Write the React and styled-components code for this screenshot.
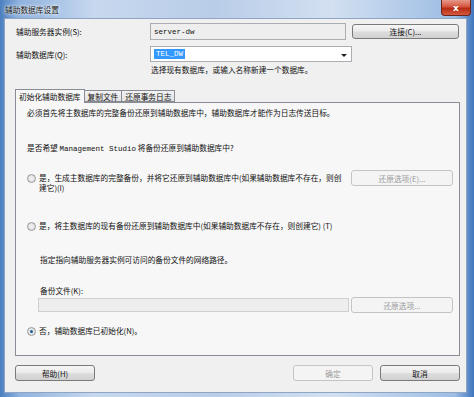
import React from 'react';
import styled, { createGlobalStyle } from 'styled-components';

const GlobalStyle = createGlobalStyle`
  html, body {
    margin: 0;
    padding: 0;
    overflow: hidden;
  }
  body {
    font-family: "Noto Sans CJK SC", "Liberation Sans", sans-serif;
    font-size: 7.7px;
    color: #111;
  }
`;

const Frame = styled.div`
  width: 474px;
  height: 397px;
  box-sizing: border-box;
  display: flex;
  flex-direction: column;
  padding: 0 7px 4px 4px;
  background: linear-gradient(to right, #4b7fc0 0%, #8fb2de 4%, #c7d8ee 20%, #b9cde8 45%, #d2e0f1 70%, #9dbde4 96%, #3f76bd 100%);
`;

const TitleBar = styled.div`
  height: 18px;
  display: flex;
  align-items: flex-start;
  justify-content: space-between;
`;

const Title = styled.span`
  padding: 4px 0 0 1px;
  font-size: 7.7px;
  color: #1a1a1a;
  text-shadow: 0 0 4px #fff, 0 0 2px #fff;
`;

const CloseBtn = styled.div`
  width: 28px;
  height: 15px;
  margin-right: -4px;
  border: 1px solid #6b2418;
  border-top: none;
  border-radius: 0 0 4px 4px;
  background: linear-gradient(#e6998a 0%, #d4553f 45%, #b52a13 55%, #d45a3f 100%);
  color: #fff;
  display: flex;
  align-items: center;
  justify-content: center;
  font-family: "DejaVu Sans", sans-serif;
  font-weight: bold;
  font-size: 9px;
`;

const Client = styled.div`
  flex: 1;
  background: #f0f0f0;
  border: 1px solid #8ea5c4;
  padding: 4px 6px 0 10px;
  display: flex;
  flex-direction: column;
`;

const FieldRow = styled.div`
  display: flex;
  align-items: center;
  height: ${(p) => p.h || 17}px;
  margin-top: ${(p) => p.mt || 0}px;
`;

const Label = styled.div`
  width: ${(p) => p.w || 135}px;
  padding-left: ${(p) => p.pl || 1}px;
  box-sizing: border-box;
`;

const TextBox = styled.div`
  width: ${(p) => p.w}px;
  height: ${(p) => p.h || 17}px;
  box-sizing: border-box;
  border: 1px solid ${(p) => (p.disabled ? '#cfcfcf' : '#abadb3')};
  background: ${(p) => (p.white ? '#fff' : '#eeeeee')};
  display: flex;
  align-items: center;
  padding-left: 3px;
  position: relative;
`;

const Mono = styled.span`
  font-family: "Liberation Mono", "DejaVu Sans Mono", monospace;
  font-size: 7.5px;
`;

const Selected = styled.span`
  background: #3399ff;
  color: #fff;
  font-family: "Liberation Mono", "DejaVu Sans Mono", monospace;
  font-size: 7.5px;
  padding: 0 2px;
  line-height: 10px;
`;

const Arrow = styled.span`
  position: absolute;
  right: 4px;
  top: 7px;
  width: 0;
  height: 0;
  border-left: 3px solid transparent;
  border-right: 3px solid transparent;
  border-top: 3px solid #222;
`;

const Button = styled.div`
  width: ${(p) => p.w}px;
  height: ${(p) => p.h || 15}px;
  margin-left: ${(p) => p.ml || 0}px;
  box-sizing: border-box;
  border: 1px solid ${(p) => (p.disabled ? '#c4c4c4' : '#7a7a7a')};
  border-radius: 3px;
  background: ${(p) =>
    p.disabled
      ? '#f4f4f4'
      : 'linear-gradient(#f6f6f6 0%, #ebebeb 48%, #dddddd 52%, #d1d1d1 100%)'};
  color: ${(p) => (p.disabled ? '#9a9a9a' : '#111')};
  display: flex;
  align-items: center;
  justify-content: center;
  flex-shrink: 0;
`;

const Hint = styled.div`
  margin: 2px 0 0 136px;
  height: 11px;
  line-height: 11px;
`;

const Tabs = styled.div`
  display: flex;
  align-items: flex-end;
  margin-top: 13px;
  height: 14px;
  position: relative;
  z-index: 1;
`;

const Tab = styled.div`
  height: ${(p) => (p.active ? 14 : 12)}px;
  box-sizing: border-box;
  padding: 0 3px;
  margin-bottom: ${(p) => (p.active ? -1 : 0)}px;
  border: 1px solid #898c95;
  border-bottom: ${(p) => (p.active ? 'none' : '1px solid #898c95')};
  margin-left: ${(p) => (p.active ? 0 : -1)}px;
  background: ${(p) => (p.active ? '#f7f7f7' : 'linear-gradient(#f2f2f2, #e3e3e3)')};
  display: flex;
  align-items: center;
`;

const Panel = styled.div`
  height: 254px;
  box-sizing: border-box;
  border: 1px solid #898c95;
  background: #f7f7f7;
  padding: 4px 6px 0 11px;
  display: flex;
  flex-direction: column;
`;

const Para = styled.div`
  line-height: 11px;
  margin-top: ${(p) => p.mt || 0}px;
  padding-left: ${(p) => p.pl || 0}px;
`;

const OptionRow = styled.div`
  display: flex;
  align-items: flex-start;
  margin-top: ${(p) => p.mt || 0}px;
`;

const Radio = styled.span`
  width: 7px;
  height: 7px;
  border-radius: 50%;
  border: 1px solid #9a9a9a;
  background: radial-gradient(circle, #f4f4f4 0%, #d6d6d6 100%);
  flex-shrink: 0;
  margin: 1px 3px 0 0;
  display: flex;
  align-items: center;
  justify-content: center;
  &::after {
    content: '';
    display: ${(p) => (p.checked ? 'block' : 'none')};
    width: 3px;
    height: 3px;
    border-radius: 50%;
    background: #1c5f96;
  }
`;

const OptionText = styled.div`
  width: ${(p) => p.w || 'auto'};
  line-height: 10px;
`;

const Footer = styled.div`
  display: flex;
  align-items: center;
  margin-top: 9px;
`;

const Spacer = styled.div`
  flex: 1;
`;

export default function App() {
  return (
    <>
      <GlobalStyle />
      <Frame>
        <TitleBar>
          <Title>辅助数据库设置</Title>
          <CloseBtn>x</CloseBtn>
        </TitleBar>
        <Client>
          <FieldRow>
            <Label>辅助服务器实例(S):</Label>
            <TextBox w={196}>
              <Mono>server-dw</Mono>
            </TextBox>
            <Button w={107} ml={6}>连接(C)...</Button>
          </FieldRow>
          <FieldRow mt={6} h={16}>
            <Label>辅助数据库(Q):</Label>
            <TextBox w={202} h={16} white>
              <Selected>TEL_DW</Selected>
              <Arrow />
            </TextBox>
          </FieldRow>
          <Hint>选择现有数据库，或输入名称新建一个数据库。</Hint>
          <Tabs>
            <Tab active>初始化辅助数据库</Tab>
            <Tab>复制文件</Tab>
            <Tab>还原事务日志</Tab>
          </Tabs>
          <Panel>
            <Para>必须首先将主数据库的完整备份还原到辅助数据库中，辅助数据库才能作为日志传送目标。</Para>
            <Para mt={24}>
              是否希望 <Mono>Management Studio</Mono> 将备份还原到辅助数据库中?
            </Para>
            <OptionRow mt={18}>
              <Radio />
              <OptionText w="306px">
                是，生成主数据库的完整备份，并将它还原到辅助数据库中(如果辅助数据库不存在，则创建它)(I)
              </OptionText>
              <Spacer />
              <Button w={102} h={16} disabled style={{ marginTop: -3 }}>
                还原选项(E)...
              </Button>
            </OptionRow>
            <OptionRow mt={28}>
              <Radio />
              <OptionText>是，将主数据库的现有备份还原到辅助数据库中(如果辅助数据库不存在，则创建它) (T)</OptionText>
            </OptionRow>
            <Para mt={23} pl={13}>指定指向辅助服务器实例可访问的备份文件的网络路径。</Para>
            <Para mt={20} pl={13}>备份文件(K):</Para>
            <FieldRow mt={1} h={16}>
              <TextBox w={311} h={14} disabled style={{ marginLeft: 11 }} />
              <Spacer />
              <Button w={102} h={16} disabled>还原选项...</Button>
            </FieldRow>
            <OptionRow mt={13}>
              <Radio checked />
              <OptionText>否，辅助数据库已初始化(N)。</OptionText>
            </OptionRow>
          </Panel>
          <Footer>
            <Button w={80} h={16}>帮助(H)</Button>
            <Spacer />
            <Button w={80} h={16} disabled>确定</Button>
            <Button w={80} h={16} ml={7}>取消</Button>
          </Footer>
        </Client>
      </Frame>
    </>
  );
}
